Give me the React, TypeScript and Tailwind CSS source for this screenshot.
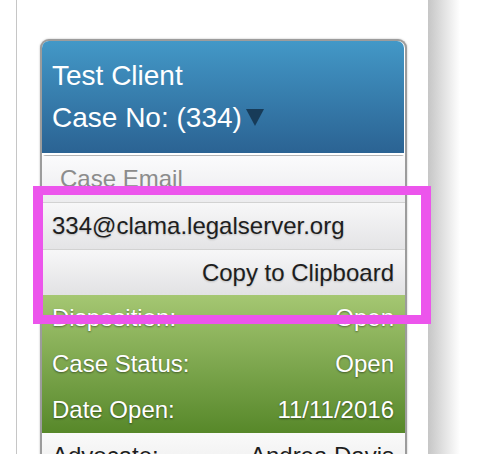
import React from "react";

const font = { fontFamily: '"Liberation Sans", Arial, sans-serif' };

function GreenRow({ label, value }: { label: string; value: string }) {
  return (
    <div className="flex h-[46px] items-center justify-between pl-[10px] pr-[11px] text-[24px] text-white [text-shadow:0_1px_2px_rgba(0,0,0,0.45)]">
      <span>{label}</span>
      <span>{value}</span>
    </div>
  );
}

export default function App() {
  return (
    <div className="relative flex h-[454px] w-[492px] overflow-hidden bg-white" style={font}>
      <div className="w-[16px] shrink-0 bg-white" />

      {/* main column */}
      <div className="w-[412px] shrink-0 border-l border-[#c6c6c6] bg-white pt-[39px] pl-[23px]">
        <div className="w-[367px] rounded-t-[9px] border-2 border-b-0 border-[#9c9c9c] bg-white shadow-[0_0_2px_rgba(0,0,0,0.3)]">
          {/* client header */}
          <div className="mr-[1px] h-[112px] rounded-t-[7px] bg-gradient-to-b from-[#4398c7] to-[#2b6393] pl-[10px] pt-[14px] text-[28px] leading-[42px] text-white">
            <div>Test Client</div>
            <div className="flex items-center">
              <span>Case No: (334)</span>
              <svg width="18" height="17" viewBox="0 0 18 17" className="ml-[4px] mt-[-2px]">
                <path d="M0 0H18L9 17Z" fill="#173b58" />
              </svg>
            </div>
          </div>

          {/* case email dropdown */}
          <div className="mt-[2px] rounded-t-[4px] border-t border-[#b4b4b4]">
            <div className="flex h-[46px] items-center bg-gradient-to-b from-[#fbfbfc] to-[#ececee] pl-[18px] text-[24px] text-[#8c8c8c]">
              Case Email
            </div>
            <div className="flex h-[47px] items-center border-t border-[#d2d2d2] bg-gradient-to-b from-[#f7f7f8] to-[#e4e4e6] pl-[10px] text-[24px] text-[#1e1e1e] [text-shadow:0_1px_2px_rgba(0,0,0,0.2)]">
              334@clama.legalserver.org
            </div>
            <div className="flex h-[46px] items-center justify-end border-t border-[#d2d2d2] bg-gradient-to-b from-[#f7f7f8] to-[#e2e2e4] pr-[11px] text-[24px] text-[#1e1e1e] [text-shadow:0_1px_2px_rgba(0,0,0,0.2)]">
              Copy to Clipboard
            </div>
          </div>

          {/* status block */}
          <div className="bg-gradient-to-b from-[#a5c772] to-[#578829]">
            <GreenRow label="Disposition:" value="Open" />
            <GreenRow label="Case Status:" value="Open" />
            <GreenRow label="Date Open:" value="11/11/2016" />
          </div>

          <div className="flex h-[46px] items-center justify-between bg-gradient-to-b from-[#fafafa] to-[#ececec] pl-[10px] pr-[11px] text-[24px] text-[#1e1e1e]">
            <span>Advocate:</span>
            <span>Andrea Davis</span>
          </div>
        </div>
      </div>

      {/* column shadow */}
      <div className="w-[32px] shrink-0 bg-gradient-to-r from-[#c6c6c6] to-white" />
      <div className="flex-1 bg-white" />

      {/* highlight annotation */}
      <div className="pointer-events-none absolute left-[33px] top-[186px] h-[138px] w-[398px] border-x-[10px] border-y-[9px] border-[#ec55ec]" />
    </div>
  );
}
